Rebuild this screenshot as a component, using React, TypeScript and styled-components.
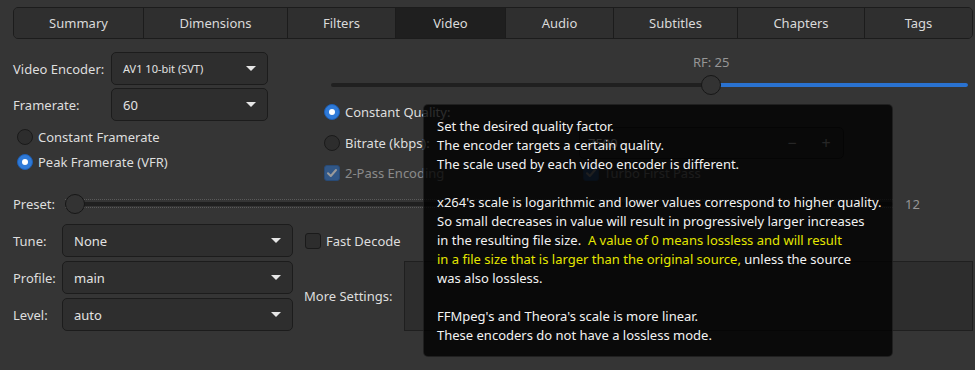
import React from "react";
import styled, { createGlobalStyle } from "styled-components";

const GlobalStyle = createGlobalStyle`
  html, body { margin: 0; padding: 0; background: #353535; }
  body {
    font-family: "Noto Sans", "Open Sans", "DejaVu Sans", sans-serif;
    font-size: 13px;
    color: #dedede;
  }
  * { box-sizing: border-box; }
`;

const Page = styled.div`
  position: relative;
  width: 975px;
  height: 370px;
  overflow: hidden;
  padding: 7px 2px 0 13px;
  background: #353535;
`;

const TabBar = styled.div`
  display: flex;
  width: 960px;
  height: 32px;
  border: 1px solid #1c1c1c;
  border-radius: 5px;
  overflow: hidden;
  background: #2f2f2f;
`;

const Tab = styled.div<{ $w: number; $active?: boolean }>`
  flex: 0 0 ${(p) => p.$w}px;
  display: flex;
  align-items: center;
  justify-content: center;
  border-left: 1px solid #1c1c1c;
  background: ${(p) => (p.$active ? "#1f1f1f" : "#2f2f2f")};
  color: #dadada;
  &:first-child { border-left: none; }
`;

const TopSection = styled.div`
  display: grid;
  grid-template-columns: 311px 1fr;
`;

const LeftColumn = styled.div`
  display: flex;
  flex-direction: column;
  padding-top: 13px;
`;

const FieldRow = styled.div<{ $label: number }>`
  display: grid;
  grid-template-columns: ${(p) => p.$label}px auto;
  align-items: center;
  height: 33px;
  & + & { margin-top: 3px; }
`;

const Label = styled.span`
  color: #dedede;
  white-space: nowrap;
`;

const ComboBox = styled.div<{ $w: number; $small?: boolean }>`
  width: ${(p) => p.$w}px;
  height: 33px;
  display: flex;
  align-items: center;
  justify-content: space-between;
  padding: 0 11px 0 11px;
  background: #2e2e2e;
  border: 1px solid #1c1c1c;
  border-radius: 5px;
  font-size: ${(p) => (p.$small ? 11 : 13)}px;
  color: #e2e2e2;
`;

const RadioList = styled.div`
  display: flex;
  flex-direction: column;
  margin-top: 3px;
  padding-left: 4px;
`;

const ChoiceRow = styled.div<{ $h: number; $disabled?: boolean }>`
  display: flex;
  align-items: center;
  gap: 5px;
  height: ${(p) => p.$h}px;
  opacity: ${(p) => (p.$disabled ? 0.5 : 1)};
  white-space: nowrap;
`;

const RadioCircle = styled.span<{ $checked?: boolean }>`
  flex: 0 0 16px;
  width: 16px;
  height: 16px;
  border-radius: 50%;
  border: 1px solid ${(p) => (p.$checked ? "#1d5fb5" : "#1a1a1a")};
  background: ${(p) => (p.$checked ? "#2f7ad8" : "#2d2d2d")};
  display: inline-flex;
  align-items: center;
  justify-content: center;
  &::after {
    content: "";
    display: ${(p) => (p.$checked ? "block" : "none")};
    width: 6px;
    height: 6px;
    border-radius: 50%;
    background: #ffffff;
  }
`;

const CheckSquare = styled.span<{ $checked?: boolean }>`
  flex: 0 0 16px;
  width: 16px;
  height: 16px;
  border-radius: 3px;
  border: 1px solid ${(p) => (p.$checked ? "#1d5fb5" : "#1a1a1a")};
  background: ${(p) => (p.$checked ? "#2f7ad8" : "#2d2d2d")};
  display: inline-flex;
  align-items: center;
  justify-content: center;
`;

const RightColumn = styled.div`
  display: flex;
  flex-direction: column;
  padding-top: 14px;
`;

const ScaleArea = styled.div`
  position: relative;
  height: 42px;
  padding: 22px 0 0 7px;
`;

const ScaleValue = styled.span`
  position: absolute;
  top: 0;
  line-height: 18px;
  transform: translateX(-50%);
  color: #969696;
  white-space: nowrap;
`;

const SliderBox = styled.div<{ $w: number }>`
  position: relative;
  width: ${(p) => p.$w}px;
  height: 20px;
`;

const Track = styled.div`
  position: absolute;
  left: 0;
  right: 0;
  top: 8px;
  height: 4px;
  border-radius: 2px;
  background: #202020;
`;

const TrackFill = styled.div`
  position: absolute;
  right: 0;
  top: 8px;
  height: 4px;
  border-radius: 2px;
  background: #2a72d0;
`;

const Marks = styled.div`
  position: absolute;
  left: 0;
  right: 0;
  top: 5px;
  height: 9px;
  border-top: 1px dotted #5a5a5a;
  border-bottom: 1px dotted #5a5a5a;
`;

const Handle = styled.div`
  position: absolute;
  top: 0;
  width: 20px;
  height: 20px;
  margin-left: -10px;
  border-radius: 50%;
  background: #333333;
  border: 1px solid #171717;
`;

const OptionsGrid = styled.div`
  display: grid;
  grid-template-columns: 255px 265px;
  grid-template-rows: 22px 32px 20px;
  row-gap: 4px;
  align-items: center;
  margin-top: 6px;
`;

const SpinBox = styled.div`
  display: flex;
  align-items: center;
  height: 32px;
  background: #2e2e2e;
  border: 1px solid #1c1c1c;
  border-radius: 5px;
  color: #e2e2e2;
`;

const SpinValue = styled.span`
  flex: 1;
  padding-left: 8px;
`;

const SpinButton = styled.span`
  flex: 0 0 34px;
  text-align: center;
  font-size: 16px;
  color: #bdbdbd;
`;

const IndentCell = styled.div`
  padding-left: 4px;
`;

const PresetRow = styled.div`
  display: grid;
  grid-template-columns: 52px 828px auto;
  align-items: center;
  height: 20px;
  margin-top: 11px;
`;

const DimValue = styled.span`
  color: #969696;
  padding-left: 12px;
`;

const BottomGrid = styled.div`
  display: grid;
  grid-template-columns: 49px 231px 111px 569px;
  grid-template-rows: 33px 33px 33px;
  row-gap: 4px;
  align-items: center;
  margin-top: 10px;
`;

const SideCell = styled.div<{ $pad: number; $row: string; $col: string }>`
  grid-row: ${(p) => p.$row};
  grid-column: ${(p) => p.$col};
  padding-left: ${(p) => p.$pad}px;
  align-self: center;
`;

const GridCell = styled.div<{ $row: string; $col: string }>`
  grid-row: ${(p) => p.$row};
  grid-column: ${(p) => p.$col};
`;

const TextArea = styled.div`
  grid-row: 2 / 4;
  grid-column: 4;
  align-self: stretch;
  background: #2d2d2d;
  border: 1px solid #1f1f1f;
`;

const Tooltip = styled.div`
  position: absolute;
  left: 423px;
  top: 104px;
  width: 470px;
  height: 253px;
  padding: 12px 13px 0 13px;
  background: rgba(0, 0, 0, 0.8);
  border: 1px solid rgba(255, 255, 255, 0.09);
  border-radius: 5px;
  color: #f2f2f2;
  font-size: 13px;
  line-height: 19px;
  white-space: pre;
`;

const Highlight = styled.span`
  color: #e4e600;
`;

const Arrow = () => (
  <svg width="10" height="5" viewBox="0 0 10 5">
    <path d="M0 0 L10 0 L5 5 Z" fill="#e6e6e6" />
  </svg>
);

const Tick = () => (
  <svg width="12" height="12" viewBox="0 0 12 12">
    <path d="M2 6.2 L4.8 9 L10 3" stroke="#ffffff" strokeWidth="2" fill="none" strokeLinecap="round" strokeLinejoin="round" />
  </svg>
);

const Combo = ({ w, text, small }: { w: number; text: string; small?: boolean }) => (
  <ComboBox $w={w} $small={small}>
    <span>{text}</span>
    <Arrow />
  </ComboBox>
);

const Radio = ({ label, checked, h }: { label: string; checked?: boolean; h: number }) => (
  <ChoiceRow $h={h}>
    <RadioCircle $checked={checked} />
    <Label>{label}</Label>
  </ChoiceRow>
);

const Check = ({ label, checked, disabled, h }: { label: string; checked?: boolean; disabled?: boolean; h: number }) => (
  <ChoiceRow $h={h} $disabled={disabled}>
    <CheckSquare $checked={checked}>{checked && <Tick />}</CheckSquare>
    <Label>{label}</Label>
  </ChoiceRow>
);

const Slider = ({ w, frac, fillRight, marks }: { w: number; frac: number; fillRight?: boolean; marks?: boolean }) => {
  const pos = 10 + frac * (w - 20);
  return (
    <SliderBox $w={w}>
      {marks && <Marks />}
      <Track />
      {fillRight && <TrackFill style={{ width: w - pos }} />}
      <Handle style={{ left: pos }} />
    </SliderBox>
  );
};

const tabs: [string, number][] = [
  ["Summary", 129],
  ["Dimensions", 144],
  ["Filters", 108],
  ["Video", 110],
  ["Audio", 108],
  ["Subtitles", 124],
  ["Chapters", 127],
  ["Tags", 108],
];

export default function App() {
  const rfW = 637;
  const rfFrac = 0.6;
  const rfPos = 7 + 10 + rfFrac * (rfW - 20);
  return (
    <Page>
      <GlobalStyle />
      <TabBar>
        {tabs.map(([t, w]) => (
          <Tab key={t} $w={w} $active={t === "Video"}>
            {t}
          </Tab>
        ))}
      </TabBar>

      <TopSection>
        <LeftColumn>
          <FieldRow $label={98}>
            <Label>Video Encoder:</Label>
            <Combo w={157} text="AV1 10-bit (SVT)" small />
          </FieldRow>
          <FieldRow $label={98}>
            <Label>Framerate:</Label>
            <Combo w={157} text="60" />
          </FieldRow>
          <RadioList>
            <Radio h={25} label="Constant Framerate" />
            <Radio h={25} label="Peak Framerate (VFR)" checked />
          </RadioList>
        </LeftColumn>

        <RightColumn>
          <ScaleArea>
            <ScaleValue style={{ left: rfPos }}>RF: 25</ScaleValue>
            <Slider w={rfW} frac={rfFrac} fillRight />
          </ScaleArea>
          <OptionsGrid>
            <Radio h={22} label="Constant Quality:" checked />
            <div />
            <Radio h={22} label="Bitrate (kbps):" />
            <SpinBox>
              <SpinValue>7500</SpinValue>
              <SpinButton>−</SpinButton>
              <SpinButton>+</SpinButton>
            </SpinBox>
            <Check h={20} label="2-Pass Encoding" checked disabled />
            <IndentCell>
              <Check h={20} label="Turbo First Pass" checked disabled />
            </IndentCell>
          </OptionsGrid>
        </RightColumn>
      </TopSection>

      <PresetRow>
        <Label>Preset:</Label>
        <Slider w={828} frac={0} marks />
        <DimValue>12</DimValue>
      </PresetRow>

      <BottomGrid>
        <Label>Tune:</Label>
        <Combo w={231} text="None" />
        <SideCell $pad={12} $row="1" $col="3 / 5">
          <Check h={20} label="Fast Decode" />
        </SideCell>
        <Label>Profile:</Label>
        <Combo w={231} text="main" />
        <SideCell $pad={11} $row="2 / 4" $col="3">
          <Label>More Settings:</Label>
        </SideCell>
        <TextArea />
        <GridCell $row="3" $col="1">
          <Label>Level:</Label>
        </GridCell>
        <GridCell $row="3" $col="2">
          <Combo w={231} text="auto" />
        </GridCell>
      </BottomGrid>

      <Tooltip>
        {"Set the desired quality factor.\nThe encoder targets a certain quality.\nThe scale used by each video encoder is different.\n\nx264's scale is logarithmic and lower values correspond to higher quality.\nSo small decreases in value will result in progressively larger increases\nin the resulting file size.  "}
        <Highlight>{"A value of 0 means lossless and will result\nin a file size that is larger than the original source,"}</Highlight>
        {" unless the source\nwas also lossless.\n\nFFMpeg's and Theora's scale is more linear.\nThese encoders do not have a lossless mode."}
      </Tooltip>
    </Page>
  );
}
